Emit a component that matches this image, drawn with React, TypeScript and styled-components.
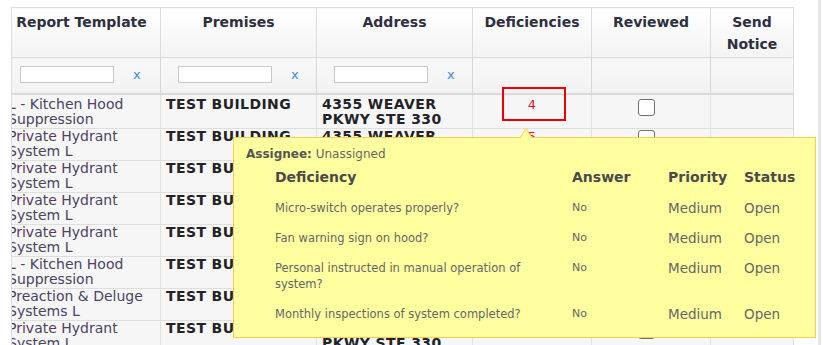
import React from 'react';
import styled, { createGlobalStyle } from 'styled-components';

const GlobalStyle = createGlobalStyle`
    html, body {
        margin: 0;
        padding: 0;
        background: #ffffff;
    }
    body {
        font-family: "DejaVu Sans", Verdana, sans-serif;
    }
`;

const Page = styled.div`
    position: relative;
    width: 823px;
    height: 345px;
    overflow: hidden;
    display: flex;
    padding: 7px 0 0 11px;
    box-sizing: border-box;
`;

const GridViewport = styled.div`
    width: 783px;
    height: 338px;
    overflow: hidden;
    border-left: 1px solid #dcdcdc;
    border-right: 1px solid #dcdcdc;
    box-sizing: border-box;
`;

const ScrollEdge = styled.div`
    width: 3px;
    height: 345px;
    margin-top: -7px;
    margin-left: 24px;
    background: #e6e6e6;
`;

const Grid = styled.table`
    margin-left: -10px;
    width: 791px;
    border-collapse: collapse;
    table-layout: fixed;
`;

const HeadCell = styled.th`
    height: 50px;
    box-sizing: border-box;
    padding: 3px 4px 0;
    vertical-align: top;
    text-align: center;
    font-size: 14px;
    line-height: 22px;
    font-weight: bold;
    color: #2f2f40;
    background: linear-gradient(#ffffff, #f3f3f3);
    border: 1px solid #dcdcdc;
`;

const FilterCell = styled.td`
    height: 36px;
    box-sizing: border-box;
    padding: 0 0 0 17px;
    background: linear-gradient(#f8f8f8, #f2f2f2);
    border: 1px solid #d6d6d6;
    border-bottom: 2px solid #dadada;
`;

const FilterWrap = styled.div`
    display: flex;
    align-items: center;
    gap: 19px;
    margin-top: -1px;
`;

const FilterInput = styled.input`
    width: 94px;
    height: 17px;
    box-sizing: border-box;
    margin: 0;
    border: 1px solid #c8c8c8;
    background: #ffffff;
`;

const ClearX = styled.span`
    font-size: 13px;
    color: #3a8fd4;
    line-height: 13px;
`;

const Cell = styled.td<{ $bold?: boolean; $center?: boolean; $first?: boolean }>`
    box-sizing: border-box;
    padding: ${(p) => (p.$first ? 2 : 0)}px 5px 0;
    vertical-align: top;
    overflow: hidden;
    font-size: 14px;
    line-height: 15.5px;
    letter-spacing: ${(p) => (p.$bold ? '0.4px' : '0')};
    font-weight: ${(p) => (p.$bold ? 'bold' : 'normal')};
    color: ${(p) => (p.$bold ? '#222228' : '#4a4262')};
    text-align: ${(p) => (p.$center ? 'center' : 'left')};
    background: #f6f6f6;
    border: 1px solid #e0e0e0;
    border-top: none;
    border-bottom: 1px solid #dedede;
`;

const Count = styled.span`
    color: #e8102a;
    font-size: 13px;
    letter-spacing: 0;
`;

const CheckBox = styled.span<{ $first?: boolean }>`
    display: inline-block;
    width: 15px;
    height: 15px;
    margin: ${(p) => (p.$first ? 2 : 1)}px 10px 0 0;
    border: 1px solid #6f6f6f;
    border-radius: 3px;
    background: #ffffff;
`;

const Highlight = styled.div`
    position: absolute;
    left: 502px;
    top: 87px;
    width: 64px;
    height: 34px;
    box-sizing: border-box;
    border: 2px solid #ee0000;
`;

const Tip = styled.div`
    position: absolute;
    left: 233px;
    top: 137px;
    width: 583px;
    height: 201px;
    box-sizing: border-box;
    padding: 8px 12px;
    background: #ffff9f;
    border: 1px solid #f0d24a;
    color: #555555;
`;

const TipArrow = styled.svg`
    position: absolute;
    left: 286px;
    top: -10px;
`;

const Assignee = styled.div`
    font-size: 12px;
    line-height: 16px;
    color: #666666;
    b {
        color: #555555;
    }
`;

const TipTable = styled.table`
    margin-left: 29px;
    border-collapse: collapse;
    table-layout: fixed;
    width: 540px;
`;

const TipHead = styled.th`
    height: 30px;
    padding: 0;
    text-align: left;
    vertical-align: middle;
    font-size: 14px;
    font-weight: bold;
    color: #4a4a4a;
`;

const TipCell = styled.td<{ $size: number; $wide?: boolean }>`
    padding: 8px ${(p) => (p.$wide ? 30 : 0)}px 6px 0;
    vertical-align: top;
    font-size: ${(p) => p.$size}px;
    line-height: 16px;
    color: #666666;
`;

const rows = [
    ['L - Kitchen Hood Suppression', '4'],
    ['Private Hydrant System L', '5'],
    ['Private Hydrant System L', ''],
    ['Private Hydrant System L', ''],
    ['Private Hydrant System L', ''],
    ['L - Kitchen Hood Suppression', ''],
    ['Preaction & Deluge Systems L', ''],
    ['Private Hydrant System L', ''],
];

const deficiencies = [
    'Micro-switch operates properly?',
    'Fan warning sign on hood?',
    'Personal instructed in manual operation of system?',
    'Monthly inspections of system completed?',
];

const widths = [158, 156, 156, 119, 119, 83];

const Filter: React.FC = () => (
    <FilterWrap>
        <FilterInput type="text" />
        <ClearX>x</ClearX>
    </FilterWrap>
);

const App: React.FC = () => {
    return (
        <>
            <GlobalStyle />
            <Page>
                <GridViewport>
                    <Grid>
                        <colgroup>
                            {widths.map((w, i) => <col key={i} style={{ width: w }} />)}
                        </colgroup>
                        <thead>
                            <tr>
                                <HeadCell>Report Template</HeadCell>
                                <HeadCell>Premises</HeadCell>
                                <HeadCell>Address</HeadCell>
                                <HeadCell>Deficiencies</HeadCell>
                                <HeadCell>Reviewed</HeadCell>
                                <HeadCell>Send Notice</HeadCell>
                            </tr>
                            <tr>
                                <FilterCell><Filter /></FilterCell>
                                <FilterCell><Filter /></FilterCell>
                                <FilterCell><Filter /></FilterCell>
                                <FilterCell />
                                <FilterCell />
                                <FilterCell />
                            </tr>
                        </thead>
                        <tbody>
                            {rows.map(([template, count], i) => (
                                <tr key={i}>
                                    <Cell $first={i === 0}>{template}</Cell>
                                    <Cell $first={i === 0} $bold>TEST BUILDING</Cell>
                                    <Cell $first={i === 0} $bold>4355 WEAVER PKWY STE 330</Cell>
                                    <Cell $first={i === 0} $center><Count>{count}</Count></Cell>
                                    <Cell $first={i === 0} $center><CheckBox $first={i === 0} /></Cell>
                                    <Cell $first={i === 0} />
                                </tr>
                            ))}
                        </tbody>
                    </Grid>
                </GridViewport>
                <ScrollEdge />
                <Highlight />
                <Tip>
                    <TipArrow width="12" height="10" viewBox="0 0 12 10">
                        <path d="M0 10 L6 0.5 L12 10 Z" fill="#ffff9f" />
                        <path d="M0 10 L6 0.5 L12 10" fill="none" stroke="#f0d24a" strokeWidth="1" />
                    </TipArrow>
                    <Assignee><b>Assignee:</b> Unassigned</Assignee>
                    <TipTable>
                        <colgroup>
                            <col style={{ width: 297 }} />
                            <col style={{ width: 96 }} />
                            <col style={{ width: 76 }} />
                            <col />
                        </colgroup>
                        <thead>
                            <tr>
                                <TipHead>Deficiency</TipHead>
                                <TipHead>Answer</TipHead>
                                <TipHead>Priority</TipHead>
                                <TipHead>Status</TipHead>
                            </tr>
                        </thead>
                        <tbody>
                            {deficiencies.map((d) => (
                                <tr key={d}>
                                    <TipCell $size={11.5} $wide>{d}</TipCell>
                                    <TipCell $size={11}>No</TipCell>
                                    <TipCell $size={13.5}>Medium</TipCell>
                                    <TipCell $size={13.5}>Open</TipCell>
                                </tr>
                            ))}
                        </tbody>
                    </TipTable>
                </Tip>
            </Page>
        </>
    );
};

export default App;
